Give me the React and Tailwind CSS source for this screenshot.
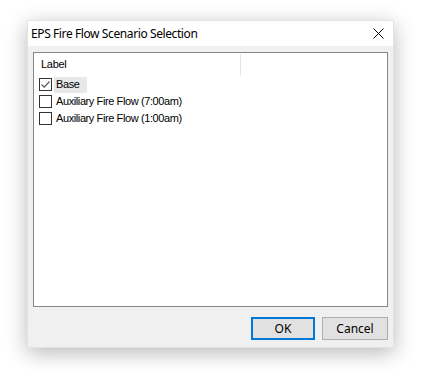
import React from "react";

const rows = [
  { label: "Base", checked: true, selected: true },
  { label: "Auxiliary Fire Flow (7:00am)", checked: false },
  { label: "Auxiliary Fire Flow (1:00am)", checked: false },
];

const CheckBox = ({ checked }) => (
  <div className="w-[13px] h-[13px] border border-[#333333] bg-white flex items-center justify-center shrink-0">
    {checked && (
      <svg width="11" height="11" viewBox="0 0 11 11">
        <path d="M1.5 5.5 L4.2 8.2 L9.5 2.5" fill="none" stroke="#555555" strokeWidth="1.2" />
      </svg>
    )}
  </div>
);

export default function App() {
  return (
    <div className="w-[425px] h-[369px] bg-white pt-[20px] pl-[27px]" style={{ fontFamily: '"Liberation Sans", Arial, sans-serif' }}>
      <div className="w-[367px] h-[328px] flex flex-col bg-[#f0f0f0] shadow-[0_5px_20px_rgba(0,0,0,0.28)] border border-[#e3e3e3]">
        {/* title bar */}
        <div className="h-[25px] bg-white flex items-center justify-between pl-[3px] pr-[9px] shrink-0">
          <span className="text-[12px] tracking-[-0.4px] text-black" style={{ fontFamily: '"Noto Sans", "Open Sans", sans-serif' }}>
            EPS Fire Flow Scenario Selection
          </span>
          <svg width="11" height="11" viewBox="0 0 11 11">
            <path d="M0.5 0.5 L10.5 10.5 M10.5 0.5 L0.5 10.5" stroke="#000" strokeWidth="1" />
          </svg>
        </div>
        {/* body */}
        <div className="flex-1 flex flex-col px-[5px] pt-[6px]">
          <div className="h-[255px] bg-white border border-[#828790] flex flex-col">
            <div className="h-[23px] flex items-center shrink-0">
              <div className="w-[206px] h-full flex items-center pl-[7px] text-[11px] tracking-[-0.3px] text-black">Label</div>
              <div className="w-px h-[22px] bg-[#e5e5e5]" />
            </div>
            <div className="flex flex-col pl-[5px]">
              {rows.map((r) => (
                <div key={r.label} className="h-[17px] flex items-center">
                  <CheckBox checked={r.checked} />
                  <span
                    className={`ml-[2px] px-[2px] h-[16px] flex items-center text-[11px] tracking-[-0.4px] text-black ${
                      r.selected ? "bg-[#e8e8e8] pr-[8px]" : ""
                    }`}
                  >
                    {r.label}
                  </span>
                </div>
              ))}
            </div>
          </div>
          <div className="flex justify-end gap-[7px] mt-[10px]">
            <button className="w-[64px] h-[23px] bg-[#e1e1e1] border-2 border-[#0078d7] text-[12px] text-black" style={{ fontFamily: '"Noto Sans", sans-serif' }}>
              OK
            </button>
            <button className="w-[66px] h-[23px] bg-[#e1e1e1] border border-[#adadad] text-[12px] text-black" style={{ fontFamily: '"Noto Sans", sans-serif' }}>
              Cancel
            </button>
          </div>
        </div>
      </div>
    </div>
  );
}
